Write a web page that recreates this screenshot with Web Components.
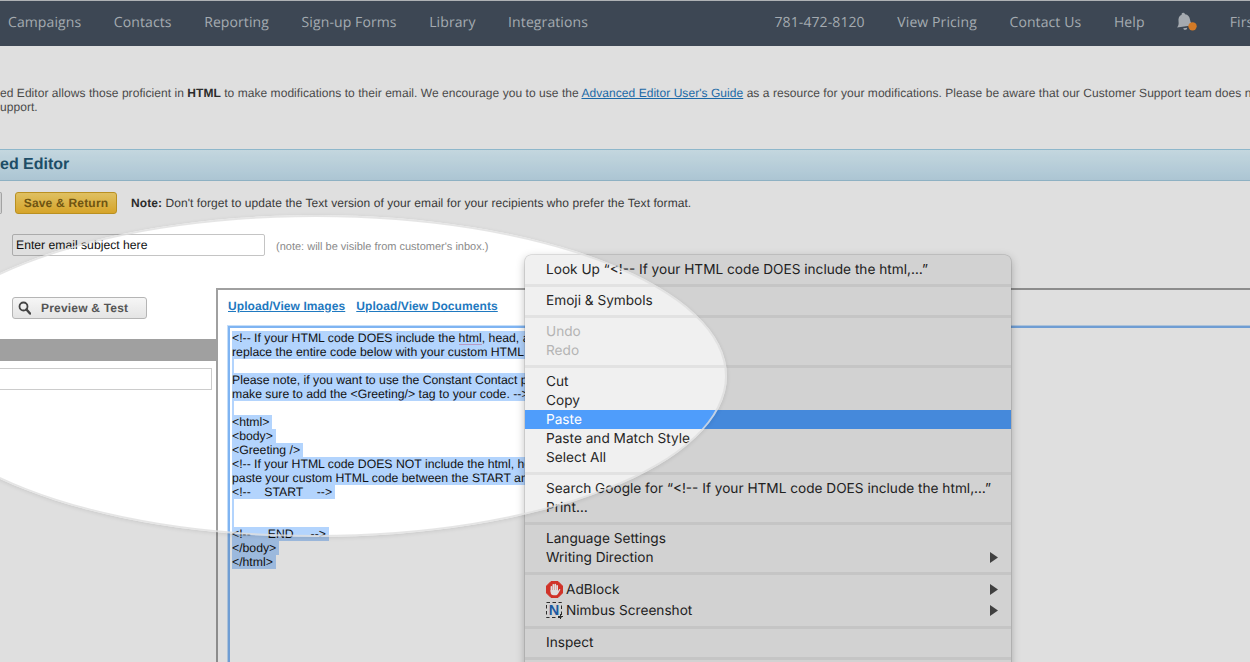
<!DOCTYPE html>
<html lang="en"><head><meta charset="utf-8"><title>Advanced Editor</title>
<style>html,body{margin:0;padding:0;background:#fff;overflow:hidden}</style></head>
<body>
<app-shell>
  <top-nav>
    <nav-link>Campaigns</nav-link><nav-link>Contacts</nav-link><nav-link>Reporting</nav-link><nav-link>Sign-up Forms</nav-link><nav-link>Library</nav-link><nav-link>Integrations</nav-link>
    <nav-link slot="right">781-472-8120</nav-link><nav-link slot="right">View Pricing</nav-link><nav-link slot="right">Contact Us</nav-link><nav-link slot="right">Help</nav-link><bell-icon slot="right"></bell-icon><nav-link slot="right">First</nav-link>
  </top-nav>
  <intro-text>ed Editor allows those proficient in <b>HTML</b> to make modifications to their email. We encourage you to use the <a>Advanced Editor User's Guide</a> as a resource for your modifications. Please be aware that our Customer Support team does not<br>upport.</intro-text>
  <section-band>ed Editor</section-band>
  <save-row><b slot="note">Note:</b><span slot="note"> Don't forget to update the Text version of your email for your recipients who prefer the Text format.</span></save-row>
  <subject-row></subject-row>
  <editor-area></editor-area>
  <context-menu>
    <menu-item>Look Up “&lt;!-- If your HTML code DOES include the html,…”</menu-item>
    <menu-sep></menu-sep>
    <menu-item>Emoji &amp; Symbols</menu-item>
    <menu-sep></menu-sep>
    <menu-item disabled>Undo</menu-item><menu-item disabled>Redo</menu-item>
    <menu-sep></menu-sep>
    <menu-item>Cut</menu-item><menu-item>Copy</menu-item><menu-item active>Paste</menu-item><menu-item>Paste and Match Style</menu-item><menu-item>Select All</menu-item>
    <menu-sep></menu-sep>
    <menu-item>Search Google for “&lt;!-- If your HTML code DOES include the html,…”</menu-item><menu-item>Print…</menu-item>
    <menu-sep></menu-sep>
    <menu-item>Language Settings</menu-item><menu-item arrow>Writing Direction</menu-item>
    <menu-sep></menu-sep>
    <menu-item arrow tall><adblock-icon slot="icon"></adblock-icon>AdBlock</menu-item>
    <menu-item arrow tall><nimbus-icon slot="icon"></nimbus-icon>Nimbus Screenshot</menu-item>
    <menu-sep></menu-sep>
    <menu-item>Inspect</menu-item>
    <menu-sep></menu-sep>
  </context-menu>
  <spot-light></spot-light>
</app-shell>
<script>
function def(name, html, init){
  customElements.define(name, class extends HTMLElement{
    constructor(){ super(); this.attachShadow({mode:'open'}).innerHTML = html; }
    connectedCallback(){ if(init) init(this); }
  });
}
const SANS = '"Liberation Sans",Arial,sans-serif';
def('app-shell', `<style>:host{display:block;position:relative;width:1250px;height:662px;overflow:hidden;background:#fff;font-family:${SANS};text-rendering:geometricPrecision}</style><slot></slot>`);
def('top-nav', `<style>
:host{display:flex;box-sizing:content-box;height:43px;padding:0 0 2px 8px;border-top:1px solid #c9cccf;background:#465260;align-items:center;white-space:nowrap;overflow:hidden}
.l,.r{display:flex;align-items:center;gap:32.600px}
.r{margin-left:186.500px}
</style><div class="l"><slot></slot></div><div class="r"><slot name="right"></slot></div>`);
def('nav-link', `<style>:host{display:block;font:500 14px "Open Sans",sans-serif;letter-spacing:.1px;color:#bdc3ca;line-height:20px}</style><slot></slot>`);
def('bell-icon', `<style>:host{display:block;width:20px;height:20px;flex:none}svg{display:block}</style>
<svg width="22" height="24" viewBox="0 0 20 22" style="margin:-2px 0 0 -2px"><g transform="rotate(-8 9 10)" fill="#bdc3ca"><path d="M8.5 1.500a1.600 1.600 0 0 1 1.600 1.600c2.600.7 3.800 2.900 3.800 5.400 0 3 .8 4.200 2 5.600H1.200c1.300-1.400 2.100-2.700 2.100-5.600 0-2.500 1.200-4.700 3.600-5.400A1.600 1.600 0 0 1 8.500 1.500z"/><path d="M6.700 15.500h3.600a1.800 1.800 0 0 1-3.600 0z"/></g><circle cx="16" cy="14" r="3.800" fill="#f28c2c"/></svg>`);
def('intro-text', `<style>:host{display:block;white-space:nowrap;overflow:hidden;padding-top:40px;font-size:12px;letter-spacing:.05px;line-height:14px;color:#555}
::slotted(a){color:#1f79c0;text-decoration:underline}::slotted(b){color:#333}</style><slot></slot>`);
def('section-band', `<style>:host{display:block;margin-top:35px;height:30px;border-top:1px solid #a3d2e9;border-bottom:1px solid #a3cbdf;background:linear-gradient(#e0f6ff,#c5e2f2);font:bold 16px/30px ${SANS};color:#245975}</style><slot></slot>`);
def('save-row', `<style>:host{display:flex;align-items:center;margin-top:11px;height:22px;font-size:12px;letter-spacing:.07px;color:#444}
.stub{width:1px;height:20px;border:1px solid #bbb;border-left:0;border-radius:0 3px 3px 0;background:#eee;flex:none}
button{all:unset;box-sizing:border-box;width:102px;height:22px;margin:0 14px 0 13px;border:1px solid #d4a526;border-radius:3px;background:linear-gradient(#ffdc70,#f5bc30);font:bold 12px/20px ${SANS};letter-spacing:.2px;text-align:center;color:#7f6114;flex:none}
::slotted(b){color:#333}</style><span class="stub"></span><button>Save &amp; Return</button><span><slot name="note"></slot></span>`);
def('subject-row', `<style>:host{display:flex;align-items:center;margin-top:20px;padding-left:12px;height:22px}
.i{box-sizing:border-box;width:253px;height:22px;border:1px solid #c4c4c4;border-radius:2px;background:#fff;font-size:12.200px;line-height:20px;padding-left:3px;color:#111}
.n{margin-left:11px;font-size:11px;color:#8a8a8a;padding-top:4px}</style><div class="i">Enter email subject here</div><div class="n">(note: will be visible from customer's inbox.)</div>`);
def('editor-area', `<style>:host{display:grid;grid-template-columns:216px 1fr;margin-top:32px;height:374px}
.left{display:flex;flex-direction:column}
.pv{box-sizing:border-box;display:flex;align-items:center;width:135px;height:22px;margin:9px 0 0 12px;border:1px solid #b5b5b5;border-radius:3px;background:linear-gradient(#f6f6f6,#e4e4e4);font:bold 12px ${SANS};letter-spacing:.2px;color:#555}
.pv svg{margin:0 10px 0 5px;flex:none}
.bar{height:22px;margin-top:20px;background:#a0a0a0}
.box{box-sizing:border-box;height:22px;width:212px;margin-top:7px;border:1px solid #ccc;border-left:0;background:#fff}
.right{border-left:2px solid #a0a0a0;border-top:2px solid #a0a0a0;padding-left:10px;min-width:0;overflow:hidden}
.links{display:flex;gap:11px;padding-top:9px;height:27px;font:bold 12px/14px ${SANS};letter-spacing:.08px;color:#1f79c0}
.links span{text-decoration:underline}
.ta{box-sizing:border-box;height:400px;border:2px solid #7fb4f2;border-right:0;box-shadow:0 0 0 1px #c5def9;padding:3px 0 0 2px;font-size:12.250px;line-height:14px;color:#111;white-space:pre;overflow:hidden}
.ta div{height:14px}
.s{background:#b3d4fd;display:block;width:298px;overflow:hidden}
.p{background:#b3d4fd;display:inline-block;padding-right:3px}
.e{display:inline-block;width:2px;height:14px;background:#b3d4fd}
u{text-decoration:none;border-bottom:2px solid #b79cc6;display:inline-block;height:13px;line-height:14px}
</style>
<div class="left"><div class="pv"><svg width="13" height="14" viewBox="0 0 13 14"><circle cx="5.500" cy="5.500" r="4" fill="none" stroke="#444" stroke-width="1.800"/><path d="M8.500 8.500l3.500 4" stroke="#444" stroke-width="2.400" stroke-linecap="round"/></svg>Preview &amp; Test</div><div class="bar"></div><div class="box"></div></div>
<div class="right"><div class="links"><span>Upload/View Images</span><span>Upload/View Documents</span></div>
<div class="ta"><div class="s">&lt;!-- If your HTML code DOES include the <u>html</u>, head, a</div><div class="s">replace the entire code below with your custom HTML</div><div><span class="e"></span></div><div class="s">Please note, if you want to use the Constant Contact p</div><div class="s">make sure to add the &lt;Greeting/&gt; tag to your code. --&gt;</div><div><span class="e"></span></div><div><span class="p">&lt;html&gt;</span></div><div><span class="p">&lt;body&gt;</span></div><div><span class="p">&lt;Greeting /&gt;</span></div><div class="s">&lt;!-- If your HTML code DOES NOT include the html, he</div><div class="s">paste your custom HTML code between the START an</div><div><span class="p">&lt;!--    START    --&gt;</span></div><div><span class="e"></span></div><div><span class="e"></span></div><div><span class="p">&lt;!--     END     --&gt;</span></div><div><span class="p">&lt;/body&gt;</span></div><div><span class="p">&lt;/html&gt;</span></div></div></div>`);
def('context-menu', `<style>:host{position:absolute;left:525px;top:255px;width:486px;height:420px;box-sizing:border-box;padding-top:5px;background:#f0f0f0;border-radius:6px 6px 0 0;box-shadow:0 0 0 .5px rgba(0,0,0,.18),0 3px 10px rgba(0,0,0,.28);font:13.650px Inter,sans-serif;display:block}</style><slot></slot>`);
def('menu-item', `<style>:host{display:flex;box-sizing:border-box;align-items:center;height:19px;padding:0 0 0 21px;color:#262626;white-space:nowrap;position:relative}
:host([tall]){height:21px}
:host([disabled]){color:#b4b4b4}
:host([active]){background:#4f9dfb;color:#fff}
.a{display:none;position:absolute;left:465px;top:50%;margin-top:-5.500px}
:host([arrow]) .a{display:block}
.ic{display:flex}</style><span class="ic"><slot name="icon"></slot></span><slot></slot><svg class="a" width="8" height="11" viewBox="0 0 8 11"><path d="M0 0l8 5.500-8 5.500z" fill="#4a4a4a"/></svg>`);
def('menu-sep', `<style>:host{display:flex;align-items:center;height:12px}div{width:100%;height:3px;background:#e2e2e2}</style><div></div>`);
def('adblock-icon', `<style>:host{display:block;width:20px;height:17px}</style><svg width="17" height="17" viewBox="0 0 17 17"><path d="M5 .5h7L16.500 5v7L12 16.500H5L.5 12V5z" fill="#ee3b2f" stroke="#ee3b2f" stroke-linejoin="round"/><g fill="#fff"><rect x="4.600" y="5" width="1.700" height="6" rx=".85"/><rect x="6.500" y="3" width="1.700" height="7" rx=".85"/><rect x="8.400" y="2.800" width="1.700" height="7" rx=".85"/><rect x="10.300" y="4" width="1.700" height="6" rx=".85"/><path d="M4.600 9h7.400v1l1.100-1.600c.5-.7 1.500-.1 1.100.7l-2 3.300c-.6 1.100-1.400 1.800-2.700 1.800H7.600c-1.800 0-3-1.200-3-3z"/></g></svg>`);
def('nimbus-icon', `<style>:host{display:block;width:20px;height:17px}</style><svg width="17" height="17" viewBox="0 0 17 17"><rect x=".5" y=".5" width="15" height="15" fill="none" stroke="#333" stroke-dasharray="3.500 2.500"/><text x="8" y="13" text-anchor="middle" font-family="Liberation Sans" font-weight="bold" font-size="14.500" fill="#1f66b8">N</text><path d="M12 14.500h5M14.500 12v5" stroke="#333"/></svg>`);
def('spot-light', `<style>:host{position:absolute;inset:0;display:block;pointer-events:none;overflow:hidden}
.e{position:absolute;left:-95px;top:215px;width:822px;height:322px;border-radius:50%;box-sizing:border-box;border:2px solid rgba(222,222,222,.8);box-shadow:0 0 0 1600px rgba(0,0,0,.125),0 1px 4px rgba(0,0,0,.1)}</style><div class="e"></div>`);
</script>
</body></html>
